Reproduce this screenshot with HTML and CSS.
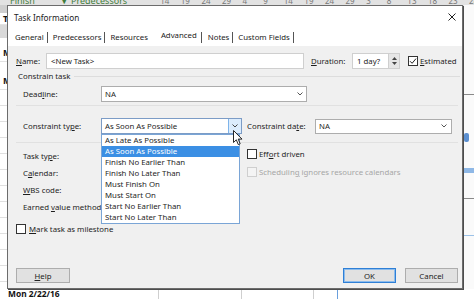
FILE: index.html
```html
<!DOCTYPE html>
<html>
	<head>
		<meta charset="UTF-8">
		<title>Task Information</title>
		<link rel="stylesheet" href="styles.css">
	</head>
	<body>
		<!-- project view behind the dialog -->
		<div class="app">
			<div class="app-head">
				<span class="h-finish">Finish</span>
				<span class="h-pred">&#9660; Predecessors</span>
				<span class="h-scale">
					<span>14</span><span>19</span><span>24</span><span>29</span><span>4</span><span>9</span><span>14</span><span>19</span>
					<span>24</span><span>29</span><span>3</span><span>8</span><span>13</span><span>18</span><span>23</span><span>28</span>
				</span>
			</div>
			<div class="app-main">
				<div class="side-l">
					<div class="l-band"></div>
					<div class="l-row">T</div>
					<div class="l-band2"></div>
					<div class="l-row l-m1">M</div>
					<div class="l-row l-m2">M</div>
					<div class="l-lines"></div>
				</div>
				<div class="mid"></div>
				<div class="side-r">
					<div class="r-gap r-g1"></div>
					<div class="r-line"></div>
					<div class="r-gap r-g2"></div>
					<div class="r-icon"></div>
					<div class="r-gap r-g3"></div>
					<div class="r-bar"></div>
					<div class="r-gap r-g4"></div>
					<div class="r-line"></div>
					<div class="r-gap r-g5"></div>
					<div class="r-line blue"></div>
				</div>
			</div>
			<div class="app-foot"><b>Mon 2/22/16</b></div>
		</div>

		<div class="dlg">
			<div class="titlebar">
				<span class="title">Task Information</span>
				<svg class="close" width="8" height="8" viewBox="0 0 8 8"><path d="M0.5 0.5L7.5 7.5M7.5 0.5L0.5 7.5" stroke="#222" stroke-width="1" fill="none"/></svg>
			</div>
			<div class="tabs">
				<span class="tab">General</span>
				<span class="tab">Predecessors</span>
				<span class="tab nosep">Resources</span>
				<span class="tab active">Advanced</span>
				<span class="tab">Notes</span>
				<span class="tab">Custom Fields</span>
			</div>
			<div class="panel">
				<div class="row name-row">
					<span class="lbl lbl-name"><u>N</u>ame:</span>
					<div class="input name-input">&lt;New Task&gt;</div>
					<span class="lbl lbl-dur"><u>D</u>uration:</span>
					<div class="input dur-input">1 day?</div>
					<div class="spin">
						<svg width="5" height="3" viewBox="0 0 5 3"><path d="M0 3L2.5 0L5 3Z" fill="#444"/></svg>
						<svg width="5" height="3" viewBox="0 0 5 3"><path d="M0 0L2.5 3L5 0Z" fill="#444"/></svg>
					</div>
					<span class="cb checked">
						<svg width="8" height="8" viewBox="0 0 8 8"><path d="M1 4.2L3.1 6.3L7 1.6" stroke="#222" stroke-width="1" fill="none"/></svg>
					</span>
					<span class="cb-lbl"><u>E</u>stimated</span>
				</div>

				<div class="group-head"><span>Constrain task</span></div>

				<div class="row field-row">
					<span class="lbl lbl-field">Dead<u>l</u>ine:</span>
					<div class="select sel-deadline">
						<span class="val">NA</span>
						<svg class="chev" width="6" height="4" viewBox="0 0 6 4"><path d="M0.5 0.5L3 3L5.5 0.5" stroke="#555" fill="none"/></svg>
					</div>
				</div>

				<div class="sep sep1"></div>

				<div class="row field-row row-constraint">
					<span class="lbl lbl-field">Constraint ty<u>p</u>e:</span>
					<div class="select sel-type open">
						<span class="val">As Soon As Possible</span>
						<span class="btn">
							<svg class="chev" width="6" height="4" viewBox="0 0 6 4"><path d="M0.5 0.5L3 3L5.5 0.5" stroke="#444" fill="none"/></svg>
						</span>
						<ul class="list">
							<li>As Late As Possible</li>
							<li class="current">As Soon As Possible</li>
							<li>Finish No Earlier Than</li>
							<li>Finish No Later Than</li>
							<li>Must Finish On</li>
							<li>Must Start On</li>
							<li>Start No Earlier Than</li>
							<li>Start No Later Than</li>
						</ul>
						<svg class="cursor" width="10" height="16" viewBox="0 0 10 16"><path d="M0.5 0.5L0.5 12.5L3.3 9.8L5.3 14.6L7.2 13.8L5.2 9.1L9 9.1Z" fill="#fff" stroke="#111" stroke-width="0.9" stroke-linejoin="round"/></svg>
					</div>
					<span class="lbl lbl-date">Constraint da<u>t</u>e:</span>
					<div class="select sel-date">
						<span class="val">NA</span>
						<svg class="chev" width="6" height="4" viewBox="0 0 6 4"><path d="M0.5 0.5L3 3L5.5 0.5" stroke="#555" fill="none"/></svg>
					</div>
				</div>

				<div class="sep sep2"></div>

				<div class="opts">
					<div class="opts-l">
						<div class="opt-row">Task ty<u>p</u>e:</div>
						<div class="opt-row">C<u>a</u>lendar:</div>
						<div class="opt-row"><u>W</u>BS code:</div>
						<div class="opt-row">Earned <u>v</u>alue method:</div>
					</div>
					<div class="opts-r">
						<div class="opt-row"><span class="cb"></span><span class="cb-lbl">Eff<u>o</u>rt driven</span></div>
						<div class="opt-row disabled"><span class="cb"></span><span class="cb-lbl">Schedulin<u>g</u> ignores resource calendars</span></div>
					</div>
				</div>

				<div class="row milestone">
					<span class="cb"></span><span class="cb-lbl"><u>M</u>ark task as milestone</span>
				</div>

				<div class="buttons">
					<span class="button btn-help"><span><u>H</u>elp</span></span>
					<span class="button btn-ok">OK</span>
					<span class="button btn-cancel">Cancel</span>
				</div>
			</div>
		</div>
	</body>
</html>
```

FILE: styles.css
```css
* {
	margin: 0;
	padding: 0;
	box-sizing: border-box;
}

ul {
	list-style: none;
}

body {
	width: 474px;
	height: 299px;
	overflow: hidden;
	position: relative;
	background: #fff;
	font-family: "Noto Sans", "Liberation Sans", sans-serif;
	font-size: 7.8px;
	color: #1e1e1e;
}

u {
	text-underline-offset: 1px;
}

/* background app */
.app {
	display: flex;
	flex-direction: column;
	height: 299px;
}

.app-head {
	height: 5px;
	background: #e2e2e2;
	overflow: hidden;
	display: flex;
	align-items: flex-end;
	white-space: nowrap;
	font-size: 9px;
	line-height: 9px;
}

.h-finish {
	margin-left: 10px;
	color: #3f7d3a;
}

.h-pred {
	margin-left: 25px;
	color: #3f7d3a;
}

.h-scale {
	margin-left: 33px;
	display: flex;
	color: #777;
	font-size: 8px;
}

.h-scale span {
	width: 20.6px;
}

.app-main {
	height: 284px;
	display: flex;
}

.side-l {
	width: 7px;
	display: flex;
	flex-direction: column;
	background: #fff;
	font-weight: bold;
	font-size: 9px;
	color: #111;
}

.l-band {
	height: 8px;
	background: #cfcfcf;
}

.l-row {
	height: 12px;
	line-height: 12px;
	padding-left: 3px;
	border-bottom: 1px solid #e2e2e2;
}

.l-band2 {
	height: 13px;
	background: #d9d9d9;
	margin-bottom: 6px;
}

.l-m1 {
	height: 18px;
	line-height: 18px;
}

.l-m2 {
	margin-top: 10px;
	height: 18px;
	line-height: 18px;
}

.l-lines {
	flex: 1;
	background: repeating-linear-gradient(#fff 0, #fff 15px, #e0e0e0 15px, #e0e0e0 16px);
}

.mid {
	flex: 1;
}

.side-r {
	width: 11px;
	display: flex;
	flex-direction: column;
	background: #fafafa;
	border-left: 1px solid #ddd;
}

.r-line {
	height: 1px;
	background: #8a8a8a;
}

.r-line.blue {
	background: #9cc2e8;
}

.r-g1 { height: 89px; }
.r-g2 { height: 38px; }
.r-g3 { height: 26px; }
.r-g4 { height: 25px; }
.r-g5 { height: 36px; }

.r-icon {
	height: 9px;
	width: 5px;
	background: #5b8fd0;
	border-radius: 2px;
}

.r-bar {
	height: 5px;
	background: #8fb8e6;
}

.app-foot {
	height: 10px;
	padding-left: 8px;
	line-height: 9px;
	font-size: 8.4px;
	color: #111;
	background:
		linear-gradient(#cfcfcf, #cfcfcf) 158px 0 / 1px 10px no-repeat,
		linear-gradient(#cfcfcf, #cfcfcf) 241px 0 / 1px 10px no-repeat,
		linear-gradient(#cfcfcf, #cfcfcf) 313px 0 / 1px 10px no-repeat,
		linear-gradient(#6a9fdc, #6a9fdc) 337px 0 / 1px 10px no-repeat,
		#fff;
}

/* dialog window */
.dlg {
	position: absolute;
	left: 7px;
	top: 5px;
	width: 456px;
	height: 284px;
	border: 1px solid #6c6c6c;
	box-shadow: 1px 1px 0 #4d4d4d;
	background: #f0f0f0;
	display: flex;
	flex-direction: column;
}

.titlebar {
	height: 22px;
	background: #fff;
	display: flex;
	align-items: center;
	padding: 0 6px 0 6px;
}

.title {
	font-size: 8.2px;
	color: #222;
}

.close {
	margin-left: auto;
}

.tabs {
	height: 18px;
	background: #fff;
	display: flex;
	align-items: center;
	padding-left: 7px;
}

.tab {
	line-height: 11px;
	padding-right: 3px;
	margin-right: 5px;
	border-right: 1px solid #555;
	color: #222;
}

.tab.nosep {
	border-right: none;
	margin-right: 10px;
}

.tab.active {
	padding-bottom: 3px;
	border-right: none;
	margin-right: 0;
	padding-right: 4px;
}

.tab.active + .tab {
	border-left: 1px solid #555;
	padding-left: 6px;
}

.panel {
	flex: 1;
	display: flex;
	flex-direction: column;
}

.row {
	display: flex;
	align-items: center;
}

.name-row {
	margin-top: 7px;
	height: 16px;
	padding-left: 8px;
}

.lbl-name {
	width: 30px;
}

.input {
	height: 16px;
	background: #fff;
	border: 1px solid #cfcfcf;
	display: flex;
	align-items: center;
	padding-left: 4px;
}

.name-input {
	width: 258px;
}

.lbl-dur {
	margin-left: 7px;
	width: 41px;
}

.dur-input {
	width: 37px;
}

.spin {
	width: 11px;
	height: 16px;
	background: #e6e6e6;
	border: 1px solid #cfcfcf;
	border-left: none;
	display: flex;
	flex-direction: column;
	align-items: center;
	justify-content: center;
	gap: 2px;
}

.cb {
	width: 10px;
	height: 10px;
	border: 1px solid #333;
	background: #fff;
	display: inline-flex;
	align-items: center;
	justify-content: center;
	flex: none;
}

.name-row .cb {
	margin-left: 8px;
}

.cb-lbl {
	margin-left: 2px;
}

.group-head {
	margin-top: 2px;
	height: 10px;
	display: flex;
	align-items: center;
	padding-left: 10px;
	padding-right: 2px;
}

.group-head::after {
	content: "";
	flex: 1;
	height: 1px;
	margin-left: 4px;
	background: #dddddd;
}

.field-row {
	height: 16px;
	padding-left: 15px;
	margin-top: 5px;
}

.lbl-field {
	width: 78px;
}

.select {
	height: 16px;
	background: #fff;
	border: 1px solid #adadad;
	display: flex;
	align-items: center;
	padding-left: 3px;
}

.select .val {
	flex: 1;
}

.sel-deadline {
	width: 206px;
}

.sel-deadline .chev {
	margin-right: 3px;
}

.sep {
	height: 1px;
	background: #e1e1e1;
	margin-left: 8px;
	margin-right: 4px;
}

.sep1 {
	margin-top: 3px;
}

.row-constraint {
	margin-top: 12px;
}

.sel-type {
	width: 141px;
	position: relative;
	border-color: #7c9cc6;
}

.sel-type .btn {
	width: 13px;
	height: 14px;
	background: #dcecfc;
	border-left: 1px solid #7eb4ea;
	display: flex;
	align-items: center;
	justify-content: center;
}

.list {
	position: absolute;
	left: -1px;
	top: 15px;
	width: 139px;
	background: #fff;
	border: 1px solid #7aa5d6;
	z-index: 2;
}

.list li {
	height: 11px;
	line-height: 11px;
	padding-left: 3px;
	white-space: nowrap;
}

.list li.current {
	background: #3b8fe4;
	color: #fff;
}

.cursor {
	position: absolute;
	left: 131px;
	top: 11px;
	z-index: 3;
}

.lbl-date {
	margin-left: 5px;
	width: 68px;
}

.sel-date {
	width: 137px;
	height: 15px;
}

.sel-date .chev {
	margin-right: 4px;
}

.sep2 {
	margin-top: 8px;
}

.opts {
	margin-top: 5px;
	display: flex;
}

.opts-l {
	width: 239px;
	padding-left: 15px;
}

.opts-l .opt-row {
	height: 17px;
	line-height: 17px;
	white-space: nowrap;
}

.opts-r {
	margin-top: -3px;
}

.opts-r .opt-row {
	height: 18px;
	display: flex;
	align-items: center;
	white-space: nowrap;
}

.opt-row.disabled {
	color: #a6a6a6;
}

.opt-row.disabled .cb {
	border-color: #cfcfcf;
	background: #f4f4f4;
}

.milestone {
	margin-top: 5px;
	height: 16px;
	padding-left: 8px;
}

.milestone .cb-lbl {
	margin-left: 3px;
}

.buttons {
	margin-top: auto;
	padding: 0 4px 5px 8px;
	display: flex;
	gap: 9px;
}

.button {
	width: 53px;
	height: 15px;
	background: #e1e1e1;
	border: 1px solid #adadad;
	display: flex;
	align-items: center;
	justify-content: center;
	color: #222;
}

.btn-help {
	width: 54px;
	margin-right: auto;
}

.btn-ok {
	border-color: #2e7fd6;
	box-shadow: inset 0 0 0 1px #8dbcec;
}
```
